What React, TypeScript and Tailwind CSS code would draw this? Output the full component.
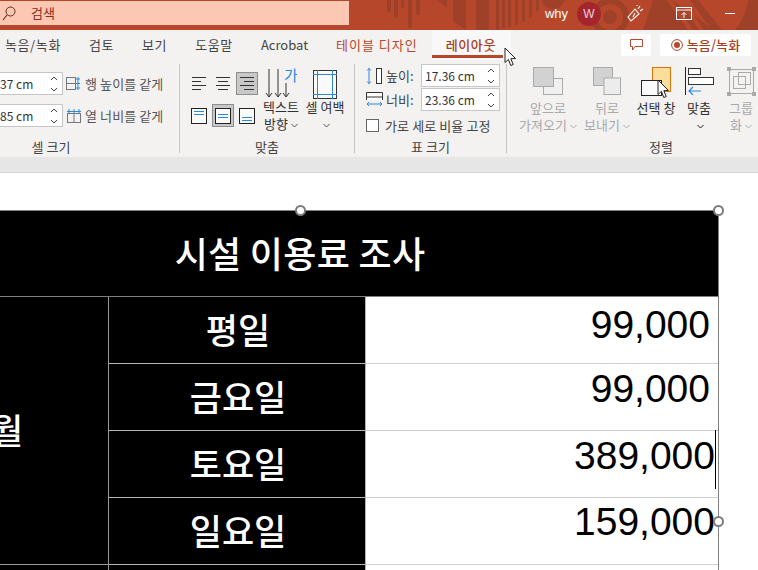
import React from "react";

const KR = '"Noto Sans CJK KR", sans-serif';

function Rl({ children, className = "" }: { children: React.ReactNode; className?: string }) {
  return <span className={"block whitespace-nowrap text-[13px] leading-[17px] tracking-[0.1px] " + className}>{children}</span>;
}

function Chev({ c = "#555" }: { c?: string }) {
  return (
    <svg width="7" height="5" viewBox="0 0 7 5" className="ml-[3px] inline-block align-middle">
      <path d="M0.5 1 L3.5 4 L6.5 1" fill="none" stroke={c} strokeWidth="1" />
    </svg>
  );
}

function Spin() {
  return (
    <svg width="8" height="18" viewBox="0 0 8 18" className="shrink-0">
      <path d="M1 5 L4 2 L7 5 M1 13 L4 16 L7 13" fill="none" stroke="#444" strokeWidth="1" />
    </svg>
  );
}

function Input({ text, className = "" }: { text: string; className?: string }) {
  return (
    <div className={"flex items-center justify-between border border-[#c6c6c6] bg-white pr-[4px] text-[12px] text-[#333] " + className}>
      <span className="whitespace-nowrap">{text}</span>
      <Spin />
    </div>
  );
}

function AlignIcon({ lines, sel }: { lines: number[][]; sel?: boolean }) {
  return (
    <div className={"flex h-[23px] w-[22px] items-center justify-center " + (sel ? "border border-[#8e8e8e] bg-[#c8c8c8]" : "")}>
      <svg width="16" height="15" viewBox="0 0 16 15">
        {lines.map((l, i) => (
          <path key={i} d={`M${l[0]} ${i * 4 + 1.5} H${l[1]}`} stroke="#333" strokeWidth="1" />
        ))}
      </svg>
    </div>
  );
}

function VAlignIcon({ y, sel }: { y: number[]; sel?: boolean }) {
  return (
    <div className={"flex h-[23px] w-[22px] items-center justify-center " + (sel ? "border border-[#8e8e8e] bg-[#c8c8c8]" : "")}>
      <svg width="16" height="16" viewBox="0 0 16 16">
        <rect x="0.5" y="0.5" width="15" height="15" fill="#fafafa" stroke="#222" />
        {y.map((v, i) => (
          <path key={i} d={`M3 ${v} H13`} stroke="#2b88d8" strokeWidth="1" />
        ))}
      </svg>
    </div>
  );
}

function Group({ w, label, labelClass = "", children }: { w: string; label: string; labelClass?: string; children: React.ReactNode }) {
  return (
    <div className={"relative flex h-full shrink-0 flex-col border-r border-[#c6c6c6] " + w}>
      <div className="min-h-0 flex-1">{children}</div>
      <div className={"-mb-[3px] flex h-[18px] items-start justify-center text-[13px] leading-[17px] tracking-[0.1px] text-[#444] " + labelClass}>{label}</div>
    </div>
  );
}

function BigBtn({ icon, lines, dim, w, tx = "mt-[1px]" }: { icon: React.ReactNode; lines: React.ReactNode[]; dim?: boolean; w: string; tx?: string }) {
  return (
    <div className={"flex shrink-0 flex-col items-center " + w + " " + (dim ? "text-[#a9a9a9]" : "text-[#333]")}>
      <div className="flex h-[34px] items-center justify-center">{icon}</div>
      <div className={"flex flex-col items-center " + tx}>
        {lines.map((l, i) => (
          <Rl key={i}>{l}</Rl>
        ))}
      </div>
    </div>
  );
}

function Cursor({ className = "" }: { className?: string }) {
  return (
    <svg width="13" height="20" viewBox="0 0 13 20" className={"absolute " + className}>
      <path d="M1 1 V15.5 L4.4 12.4 L6.8 18.5 L9.2 17.5 L6.8 11.7 L11.5 11.5 Z" fill="#fff" stroke="#222" strokeWidth="1" />
    </svg>
  );
}

function Handle({ className }: { className: string }) {
  return <div className={"absolute h-[11px] w-[11px] rounded-full border-2 border-[#7b7b7b] bg-white " + className} />;
}

const tabs = ["녹음/녹화", "검토", "보기", "도움말"];

const rows = [
  { label: "평일", v: "99,000", pt: "pt-[6px]", pr: "pr-[8px]" },
  { label: "금요일", v: "99,000", pt: "pt-[3px]", pr: "pr-[8px]" },
  { label: "토요일", v: "389,000", pt: "pt-[3px]", pr: "pr-[3px]" },
  { label: "일요일", v: "159,000", pt: "pt-[2px]", pr: "pr-[3px]" },
];

export default function App() {
  return (
    <div className="relative flex h-[570px] w-[758px] flex-col overflow-hidden bg-white" style={{ fontFamily: KR }}>
      {/* Title bar */}
      <div className="relative flex h-[30px] shrink-0 items-start bg-[#b7472a]">
        <svg width="408" height="30" viewBox="0 0 408 30" className="absolute right-0 top-0">
          <g fill="#9f4129">
            <rect x="37" y="0" width="4" height="12" />
            <rect x="44" y="0" width="4" height="18" />
            <rect x="51" y="0" width="3" height="8" />
            <rect x="58" y="0" width="4" height="28" />
            <rect x="66" y="0" width="4" height="15" />
            <path d="M87 0 H97 V8 Z" />
            <path d="M103 0 H116 V30 L103 21 Z" />
            <rect x="126" y="0" width="13" height="30" />
            <rect x="146" y="0" width="3" height="30" />
            <rect x="152" y="0" width="3" height="28" />
            <rect x="158" y="0" width="3" height="27" />
            <rect x="165" y="0" width="3" height="25" />
            <rect x="172" y="0" width="3" height="22" />
            <rect x="179" y="0" width="3" height="17" />
            <rect x="186" y="0" width="3" height="11" />
            <circle cx="203" cy="-3" r="12" />
            <circle cx="260" cy="17" r="7" />
            <path d="M293 30 L303 0 H322 L364 30 Z" />
            <path d="M385 30 C392 22 397 10 398 0 H408 V30 Z" />
          </g>
          <circle cx="260" cy="17" r="16" fill="none" stroke="#9f4129" strokeWidth="6" />
          <path d="M318 -2 L342 32 M329 -2 L353 32" stroke="#b7472a" strokeWidth="4" fill="none" />
          <path d="M340 0 L362 30 H372 L348 0 Z" fill="#9f4129" />
        </svg>
        <div className="relative mt-[1px] flex h-[24px] w-[349px] items-center bg-[#fdc8b3] pl-[2px] text-[13px] tracking-[0.1px] text-[#8a2f18]">
          <svg width="14" height="15" viewBox="0 0 14 15" className="mr-[15px]">
            <circle cx="8.5" cy="5.5" r="4.5" fill="none" stroke="#5f2a1c" strokeWidth="1" />
            <path d="M5 9 L1 14" stroke="#5f2a1c" strokeWidth="1.2" />
          </svg>
          <span>검색</span>
        </div>
        <div className="relative ml-auto flex h-[27px] items-center text-white">
          <span className="mr-[9px] text-[13px]" style={{ fontFamily: '"Liberation Sans", sans-serif' }}>why</span>
          <div className="mr-[25px] flex h-[24px] w-[24px] items-center justify-center rounded-full bg-[#a4262c] text-[12px] text-[#e8cfe0]" style={{ fontFamily: '"Liberation Sans", sans-serif' }}>W</div>
          <svg width="18" height="18" viewBox="0 0 18 18" className="mr-[32px]">
            <path d="M2 12 L9 4 L13 9 L5 16 Z M2 12 L5 16 M9 8 L7 12" fill="none" stroke="#fff" strokeWidth="1.1" />
            <path d="M12 4 L14 1 M14 6 L17 4 M11 1 L11 0" stroke="#fff" strokeWidth="1.1" />
          </svg>
          <svg width="16" height="13" viewBox="0 0 16 13" className="mr-[33px]">
            <rect x="0.5" y="0.5" width="15" height="12" fill="none" stroke="#fff" />
            <path d="M0 3 H16" stroke="#fff" />
            <path d="M8 11 V5.5 M5.5 8 L8 5.5 L10.5 8" fill="none" stroke="#fff" />
          </svg>
          <div className="mr-[23px] h-[1px] w-[10px] bg-white" />
        </div>
      </div>

      {/* Tabs */}
      <div className="flex h-[30px] shrink-0 items-stretch gap-[28px] bg-[#f3f2f1] pl-[5px] text-[13px] tracking-[0.6px] text-[#444]">
        {tabs.map((t) => (
          <div key={t} className="flex items-center whitespace-nowrap">{t}</div>
        ))}
        <div className="flex items-center whitespace-nowrap tracking-[0px]">Acrobat</div>
        <div className="flex items-center whitespace-nowrap tracking-[1px] text-[#b7472a]">테이블 디자인</div>
        <div className="relative -ml-[14px] flex w-[79px] items-center whitespace-nowrap bg-[#f8f8f8] pl-[14px] font-medium text-[#a83d22]">
          레이아웃
          <div className="absolute bottom-[2px] left-0 h-[3px] w-[71px] bg-[#b7472a]" />
        </div>
        <div className="ml-auto flex items-center gap-[9px] pr-[7px] tracking-[0.1px]">
          <div className="flex h-[22px] w-[30px] items-center justify-center rounded-[2px] bg-white">
            <svg width="13" height="12" viewBox="0 0 13 12">
              <path d="M0.5 0.5 H12.5 V7.5 H5 L2.5 11 V7.5 H0.5 Z" fill="none" stroke="#b7472a" />
            </svg>
          </div>
          <div className="flex h-[22px] w-[91px] items-center justify-center gap-[4px] rounded-[2px] bg-white font-medium text-[#a83d22]">
            <svg width="12" height="12" viewBox="0 0 12 12">
              <circle cx="6" cy="6" r="5.4" fill="none" stroke="#b7472a" />
              <circle cx="6" cy="6" r="3" fill="#b7472a" />
            </svg>
            녹음/녹화
          </div>
        </div>
      </div>

      {/* Ribbon */}
      <div className="flex h-[97px] shrink-0 items-stretch bg-[#f3f2f1] py-[4px] text-[#444]">
        <Group w="w-[180px]" label="셀 크기" labelClass="pr-[77px]">
          <div className="flex flex-col gap-[9px] pt-[8px]">
            {[
              ["37 cm", "행 높이를 같게", "r"],
              ["85 cm", "열 너비를 같게", "c"],
            ].map(([v, l, k]) => (
              <div key={k} className="flex items-center">
                <Input text={v} className="h-[23px] w-[63px] border-l-0" />
                <svg width="16" height="15" viewBox="0 0 16 15" className="mx-[3px] shrink-0">
                  {k === "r" ? (
                    <g fill="none">
                      <rect x="0.5" y="1.5" width="9" height="12" stroke="#777" />
                      <path d="M0.5 7.5 H9" stroke="#777" />
                      <path d="M12 1 V14 M10 3 H14 M10 7.5 H14 M10 12 H14" stroke="#2b88d8" />
                    </g>
                  ) : (
                    <g fill="none">
                      <rect x="1.5" y="5.5" width="13" height="9" stroke="#777" />
                      <path d="M8 5.5 V14.5" stroke="#777" />
                      <path d="M1 3.5 H15 M3 1 V6 M8 1 V6 M13 1 V6" stroke="#2b88d8" />
                    </g>
                  )}
                </svg>
                <Rl className="text-[#555]">{l}</Rl>
              </div>
            ))}
          </div>
        </Group>

        <Group w="w-[175px]" label="맞춤">
          <div className="flex items-start pl-[8px] pt-[8px]">
            <div className="flex w-[72px] flex-col gap-[9px]">
              <div className="flex items-center gap-[2px]">
                <AlignIcon lines={[[1, 15], [1, 10], [1, 15], [1, 10]]} />
                <AlignIcon lines={[[1, 15], [3, 13], [1, 15], [3, 13]]} />
                <AlignIcon sel lines={[[1, 15], [5, 15], [1, 15], [5, 15]]} />
              </div>
              <div className="flex items-center gap-[2px]">
                <VAlignIcon y={[3.5, 6.5]} />
                <VAlignIcon sel y={[6.5, 9.5]} />
                <VAlignIcon y={[9.5, 12.5]} />
              </div>
            </div>
            <div className="-mt-[5px] ml-[2px] flex">
              <BigBtn
                w="w-[38px]"
                tx="-mt-[3px]"
                lines={["텍스트", <>방향<Chev /></>]}
                icon={
                  <svg width="32" height="32" viewBox="0 0 32 32">
                    <path d="M4 1 V29 M1 25 L4 29 L7 25 M13 1 V29 M10 25 L13 29 L16 25 M21 15 V29 M18 25 L21 29 L24 25" fill="none" stroke="#333" />
                    <text x="19" y="13" fontSize="15" fill="#2b88d8" fontFamily={KR}>가</text>
                  </svg>
                }
              />
              <BigBtn
                w="w-[46px] ml-[2px]"
                tx="-mt-[3px]"
                lines={["셀 여백", <Chev />]}
                icon={
                  <svg width="24" height="29" viewBox="0 0 24 29">
                    <rect x="0.5" y="0.5" width="23" height="28" fill="#fafafa" stroke="#333" />
                    <path d="M0 4.5 H24 M0 24.5 H24 M4.5 0 V29 M19.5 0 V29" stroke="#2b88d8" fill="none" />
                  </svg>
                }
              />
            </div>
          </div>
        </Group>

        <Group w="w-[152px]" label="표 크기">
          <div className="flex flex-col pl-[11px]">
            <div className="flex items-center">
              <svg width="17" height="16" viewBox="0 0 17 16" className="mr-[3px] shrink-0">
                <path d="M3 0 V16 M1 2.5 L3 0.5 L5 2.5 M1 13.5 L3 15.5 L5 13.5" fill="none" stroke="#2b88d8" />
                <rect x="10.5" y="0.5" width="5" height="15" fill="#fff" stroke="#333" />
              </svg>
              <Rl className="w-[35px] text-[#444]">높이:</Rl>
              <Input text="17.36 cm" className="h-[23px] w-[79px] pl-[3px]" />
            </div>
            <div className="mt-px flex items-center">
              <svg width="17" height="16" viewBox="0 0 17 16" className="mr-[3px] shrink-0">
                <path d="M0.5 8 V0.5 H16.5 V8 M0.5 5 H16.5" fill="#fff" stroke="#333" />
                <path d="M1 12 H16 M3 10 L1 12 L3 14 M14 10 L16 12 L14 14" fill="none" stroke="#2b88d8" />
              </svg>
              <Rl className="w-[35px] text-[#444]">너비:</Rl>
              <Input text="23.36 cm" className="h-[23px] w-[79px] pl-[3px]" />
            </div>
            <div className="mt-[6px] flex items-center">
              <div className="mr-[6px] h-[13px] w-[13px] border border-[#666] bg-white" />
              <Rl className="text-[#444]">가로 세로 비율 고정</Rl>
            </div>
          </div>
        </Group>

        <Group w="w-[252px] border-r-0" label="정렬" labelClass="pl-[56px]">
          <div className="flex pl-[8px]">
            <BigBtn
              dim
              w="w-[66px]"
              lines={["앞으로", <>가져오기<Chev c="#aaa" /></>]}
              icon={
                <svg width="30" height="28" viewBox="0 0 30 28">
                  <rect x="10.5" y="11.5" width="19" height="16" fill="#f0f0f0" stroke="#aaa" />
                  <rect x="0.5" y="0.5" width="20" height="19" fill="#d2d2d2" stroke="#aaa" />
                </svg>
              }
            />
            <BigBtn
              dim
              w="w-[52px]"
              lines={["뒤로", <>보내기<Chev c="#aaa" /></>]}
              icon={
                <svg width="28" height="28" viewBox="0 0 28 28">
                  <rect x="0.5" y="0.5" width="19" height="18" fill="#d2d2d2" stroke="#aaa" />
                  <rect x="11" y="11" width="16.5" height="16.5" fill="#ececec" stroke="#aaa" />
                </svg>
              }
            />
            <BigBtn
              w="w-[50px] -ml-[2px]"
              lines={["선택 창"]}
              icon={
                <svg width="30" height="29" viewBox="0 0 30 29">
                  <rect x="11.5" y="0.5" width="18" height="24" fill="#fadf9c" stroke="#d9730d" />
                  <rect x="0.5" y="13.5" width="20" height="15" fill="#fafafa" stroke="#222" />
                </svg>
              }
            />
            <BigBtn
              w="w-[38px] -ml-[1px]"
              lines={["맞춤", <Chev c="#222" />]}
              icon={
                <svg width="29" height="28" viewBox="0 0 29 28">
                  <path d="M0.5 0 V28" stroke="#222" />
                  <rect x="3.5" y="1.5" width="12" height="6" fill="#fff" stroke="#333" />
                  <rect x="3.5" y="10.5" width="25" height="7" fill="#fff" stroke="#333" />
                  <path d="M4 24 H16 M8 20 L4 24 L8 28" fill="none" stroke="#2b88d8" strokeWidth="1.2" />
                </svg>
              }
            />
            <BigBtn
              dim
              w="w-[40px] ml-[3px]"
              lines={["그룹", <>화<Chev c="#aaa" /></>]}
              icon={
                <svg width="29" height="29" viewBox="0 0 29 29">
                  <rect x="2.5" y="2.5" width="24" height="24" fill="none" stroke="#aaa" />
                  <rect x="6.5" y="9.5" width="12" height="12" fill="none" stroke="#aaa" />
                  <rect x="11.5" y="5.5" width="12" height="12" fill="none" stroke="#aaa" />
                  <g fill="#aaa">
                    <rect x="0" y="0" width="4" height="4" />
                    <rect x="25" y="0" width="4" height="4" />
                    <rect x="0" y="25" width="4" height="4" />
                    <rect x="25" y="25" width="4" height="4" />
                  </g>
                </svg>
              }
            />
          </div>
        </Group>
      </div>

      {/* Gap under ribbon */}
      <div className="h-[16px] shrink-0 border-b border-[#d4d4d4] bg-[#e6e6e6]" />

      {/* Slide */}
      <div className="relative min-h-0 flex-1 bg-white pt-[37px]">
        <div className="relative w-[719px]">
          <div className="grid grid-cols-[109px_257px_352px] grid-rows-[87px_67px_67px_67px_67px_67px] border-r border-[#808080] text-white">
            <div className="col-span-3 flex items-center justify-center border-y border-[#808080] bg-black pb-[3px] pr-[118px] text-[36px] font-medium leading-none tracking-[0.3px]">
              시설 이용료 조사
            </div>
            <div className="row-span-4 flex items-center justify-start overflow-hidden border-b border-r border-[#9a9a9a] bg-black pb-[4px] text-[35px] font-medium leading-none">
              <span className="-ml-[9px]">월</span>
            </div>
            {rows.map((r) => (
              <React.Fragment key={r.label}>
                <div className="flex items-center justify-center border-b border-r border-[#b5b5b5] bg-black pb-[4px] pl-[2px] text-[35px] font-medium leading-none">
                  {r.label}
                </div>
                <div
                  className={"flex items-start justify-end border-b border-[#cfcfcf] bg-white text-[39px] leading-[44px] text-black " + r.pt + " " + r.pr}
                  style={{ fontFamily: '"Liberation Sans", sans-serif' }}
                >
                  {r.v}
                </div>
              </React.Fragment>
            ))}
            <div className="border-r border-[#9a9a9a] bg-black" />
            <div className="border-r border-[#b5b5b5] bg-black" />
            <div className="bg-white" />
          </div>
          <div className="absolute left-[715px] top-[220px] h-[59px] w-px bg-black" />
          <Handle className="left-[295px] -top-[5px]" />
          <Handle className="left-[713px] -top-[5px]" />
          <Handle className="left-[713px] top-[306px]" />
        </div>
      </div>

      <Cursor className="left-[504px] top-[47px]" />
      <Cursor className="left-[657px] top-[79px]" />
    </div>
  );
}
